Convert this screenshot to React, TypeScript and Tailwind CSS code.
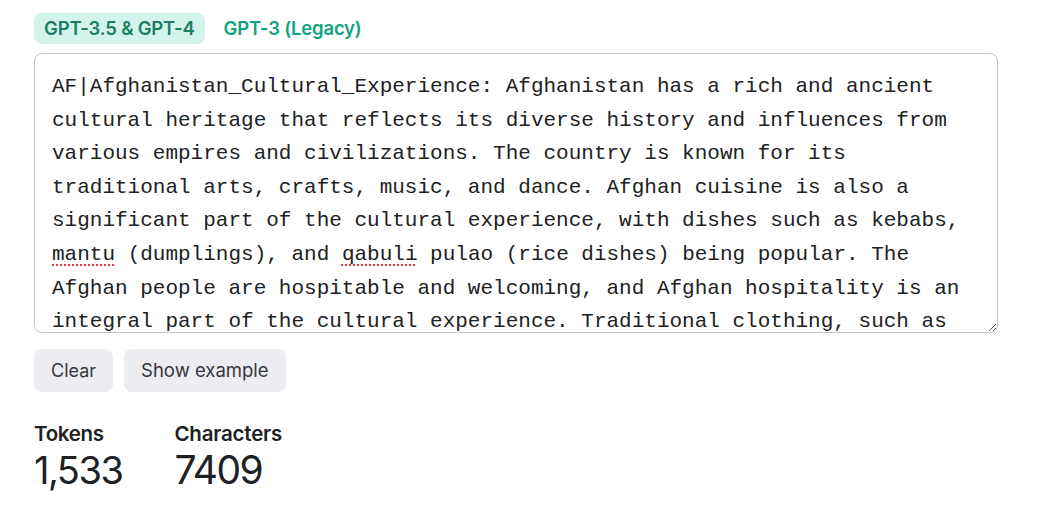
import React from "react";

const sans = "font-['Inter','Liberation_Sans',sans-serif]";

export default function App() {
  return (
    <div className={`min-h-screen bg-white px-[34px] pt-[13px] text-[#202123] ${sans}`}>
      {/* model tabs */}
      <div className="flex items-center gap-[9px]">
        <button className="h-[31px] rounded-lg bg-[#d2f4ea] px-[10px] text-[18.5px] font-semibold tracking-[-0.2px] text-[#1a7f64]">
          GPT-3.5 &amp; GPT-4
        </button>
        <button className="h-[31px] rounded-lg px-[10px] text-[18.5px] font-semibold tracking-[-0.2px] text-[#10a37f]">
          GPT-3 (Legacy)
        </button>
      </div>

      {/* input */}
      <div className="mt-[9px] h-[280px] w-[964px] resize-y overflow-hidden rounded-lg border border-[#c5c5d2] px-[17px] pt-[16px] font-['Liberation_Mono',monospace] text-[21px] leading-[33.6px] text-[#202123]">
        AF|Afghanistan_Cultural_Experience: Afghanistan has a rich and ancient cultural heritage that
        reflects its diverse history and influences from various empires and civilizations. The
        country is known for its traditional arts, crafts, music, and dance. Afghan cuisine is also a
        significant part of the cultural experience, with dishes such as kebabs,{" "}
        <span className="underline decoration-[#e53e3e] decoration-dotted decoration-2 underline-offset-[5px]">mantu</span>{" "}
        (dumplings), and{" "}
        <span className="underline decoration-[#e53e3e] decoration-dotted decoration-2 underline-offset-[5px]">qabuli</span>{" "}
        pulao (rice dishes) being popular. The Afghan people are hospitable and welcoming, and Afghan
        hospitality is an integral part of the cultural experience. Traditional clothing, such as
        the perahan tunban and chapan, is still worn on special occasions and festivals.
      </div>

      {/* actions */}
      <div className="mt-4 flex gap-[11px]">
        <button className="h-[43px] rounded-lg bg-[#ececf1] px-[17px] text-[18px] text-[#353740]">
          Clear
        </button>
        <button className="h-[43px] rounded-lg bg-[#ececf1] px-[17px] text-[18.5px] text-[#353740]">
          Show example
        </button>
      </div>

      {/* stats */}
      <div className="mt-[30px] flex gap-[52px]">
        <div>
          <div className="text-[20.5px] font-semibold leading-6 tracking-[-0.3px]">Tokens</div>
          <div className="text-[38px] leading-[48px] tracking-[-1.5px]">1,533</div>
        </div>
        <div>
          <div className="text-[20.5px] font-semibold leading-6 tracking-[-0.2px]">Characters</div>
          <div className="text-[39px] leading-[48px] tracking-[-1.5px]">7409</div>
        </div>
      </div>
    </div>
  );
}
